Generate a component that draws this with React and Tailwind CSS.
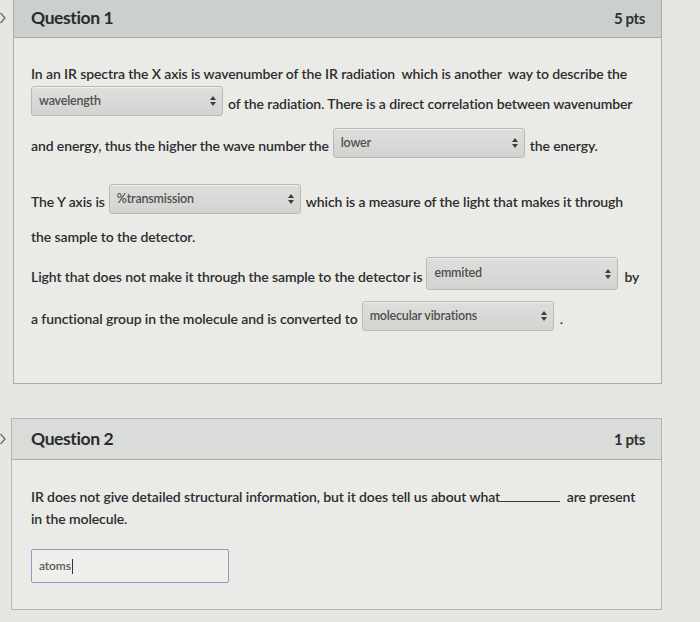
import React from "react";

const font = { fontFamily: "Lato, 'Open Sans', sans-serif" };

// select box that looks like the old Canvas dropdown
const Dropdown = ({ value, className = "" }) => (
  <div
    className={
      "relative flex items-center h-[30px] w-[192px] rounded-[3px] border border-[#b9bab7] bg-gradient-to-b from-[#dedfdc] to-[#d3d4d1] shadow-[inset_0_1px_0_rgba(255,255,255,0.5)] " +
      className
    }
  >
    <span className="pl-[7px] text-[12.5px] font-semibold text-[#4e4f4f] tracking-[-0.2px]">{value}</span>
    <svg className="absolute right-[6px] top-1/2 -translate-y-1/2" width="6" height="10" viewBox="0 0 6 10">
      <path d="M3 0 L6 4 L0 4 Z" fill="#3c3c3c" />
      <path d="M3 10 L6 6 L0 6 Z" fill="#3c3c3c" />
    </svg>
  </div>
);

const T = ({ children, className = "" }) => (
  <span className={"pt-[5px] whitespace-nowrap " + className}>{children}</span>
);

const Chevron = () => (
  <svg width="6" height="12" viewBox="0 0 6 12" className="absolute left-0 top-1/2 -translate-y-1/2">
    <path d="M0.5 1 L5 6 L0.5 11" stroke="#6b6b6b" strokeWidth="1.3" fill="none" />
  </svg>
);

const Header = ({ title, pts, className = "" }) => (
  <div className={"relative flex items-center justify-between border-b border-[#a9aeac] pl-[17px] pr-[16px] " + className}>
    <span className="text-[17.5px] font-bold tracking-[-0.4px] text-[#2a2b2b]">{title}</span>
    <span className="text-[15px] font-bold tracking-[-0.4px] text-[#2f3030]">{pts}</span>
  </div>
);

export default function App() {
  return (
    <div
      className="relative w-[700px] h-[622px] overflow-hidden bg-[#e6e6e2] text-[#2c2d2d] text-[14px] font-semibold tracking-[-0.1px]"
      style={font}
    >
      {/* Question 1 */}
      <div className="relative">
        <div className="absolute left-0 top-[18px]">
          <Chevron />
        </div>
        <div className="ml-[13px] w-[649px] border-x border-b border-[#a9aca9] bg-[#eaeae7]">
          <Header title="Question 1" pts="5 pts" className="h-[38px] bg-[#cad0cd]" />
          <div className="pl-[17px] pb-[52px]">
            <div className="mt-[26px] leading-[20px] whitespace-nowrap">
              In an IR spectra the X axis is wavenumber of the IR radiation&nbsp; which is another&nbsp; way to describe the
            </div>
            <div className="mt-[2px] flex items-center gap-[5px]">
              <Dropdown value="wavelength" />
              <T>of the radiation. There is a direct correlation between wavenumber</T>
            </div>
            <div className="mt-[12px] flex items-center gap-[4px]">
              <T>and energy, thus the higher the wave number the</T>
              <Dropdown value="lower" className="h-[29px]" />
              <T className="pl-[1px]">the energy.</T>
            </div>
            <div className="mt-[26px] flex items-center gap-[4px]">
              <T>The Y axis is</T>
              <Dropdown value="%transmission" />
              <T className="pl-[1px]">which is a measure of the light that makes it through</T>
            </div>
            <div className="mt-[13px] leading-[20px]">the sample to the detector.</div>
            <div className="mt-[10px] flex items-center gap-[4px]">
              <T>Light that does not make it through the sample to the detector is</T>
              <Dropdown value="emmited" className="h-[33px]" />
              <T className="pl-[2px]">by</T>
            </div>
            <div className="mt-[11px] flex items-center gap-[4px]">
              <T>a functional group in the molecule and is converted to</T>
              <Dropdown value="molecular vibrations" />
              <T className="pl-[2px]">.</T>
            </div>
          </div>
        </div>
      </div>

      {/* Question 2 */}
      <div className="relative mt-[34px]">
        <div className="absolute left-0 top-[21px]">
          <Chevron />
        </div>
        <div className="ml-[11px] w-[651px] border border-[#b3b5b2] bg-[#eaeae7]">
          <Header title="Question 2" pts="1 pts" className="h-[41px] bg-[#dadcd9] pl-[19px]" />
          <div className="pl-[19px] pb-[26px]">
            <div className="mt-[26px] leading-[22px]">
              IR does not give detailed structural information, but it does tell us about what
              <span className="inline-block w-[60px] border-b border-[#3a3a3a] align-baseline h-[12px]" />
              &nbsp; are present
              <br />
              in the molecule.
            </div>
            <div className="mt-[19px] flex items-center h-[34px] w-[198px] rounded-[2px] border border-[#8f9ac0] bg-[#efefec]">
              <span className="pl-[7px] text-[12px] text-[#5a5b5b] font-semibold">atoms</span>
              <span className="ml-[1px] h-[15px] w-[1px] bg-[#333]" />
            </div>
          </div>
        </div>
      </div>
    </div>
  );
}
